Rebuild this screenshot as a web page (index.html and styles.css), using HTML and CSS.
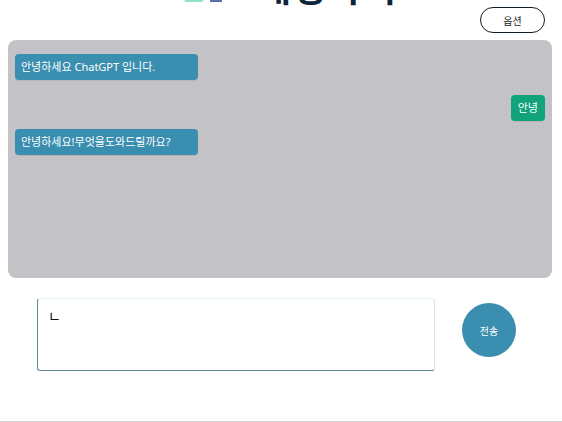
FILE: index.html
```html
<!DOCTYPE html>
<html lang="ko">
<head>
    <meta charset="UTF-8">
    <meta name="viewport" content="width=device-width, initial-scale=1.0">
    <title>ChatGPT 채팅</title>
    <link rel="stylesheet" href="styles.css">
</head>
<body>
    <div class="header">
        <svg class="logo" width="38" height="30" viewBox="0 0 38 30">
            <rect x="0" y="0" width="20" height="30" rx="3" fill="#8fe3c8"></rect>
            <rect x="26" y="0" width="12" height="30" fill="#5a6fa8"></rect>
        </svg>
        <h1 class="title">채팅하기</h1>
    </div>

    <div class="toolbar">
        <button class="option-button">옵션</button>
    </div>

    <div class="chat-box" id="chatBox">
        <div class="message bot">안녕하세요 ChatGPT 입니다.</div>
        <div class="message user">안녕</div>
        <div class="message bot second">안녕하세요!무엇을도와드릴까요?</div>
    </div>

    <div class="input-row">
        <textarea class="chat-input" id="chatInput">ㄴ</textarea>
        <button class="send-button">전송</button>
    </div>

    <div class="footer"></div>
</body>
</html>
```

FILE: styles.css
```css
body {
    font-family: 'Noto Sans', 'Noto Sans CJK KR', sans-serif;
    background-color: #fff;
    margin: 0 10px 0 8px;
    overflow: hidden;
}

.header {
    display: flex;
    align-items: flex-end;
    justify-content: center;
    height: 40px;
    margin-top: -33px;
    padding-left: 22px;
}

.logo {
    display: block;
    margin-bottom: 5px;
    margin-right: 36px;
}

.title {
    margin: 0;
    font-size: 36px;
    line-height: 40px;
    font-weight: 700;
    color: #0c2438;
    letter-spacing: 2px;
    margin-bottom: -2px;
}

.toolbar {
    display: flex;
    justify-content: flex-end;
    padding-right: 7px;
    height: 26px;
}

.option-button {
    width: 65px;
    height: 26px;
    background-color: #fff;
    border: 1.5px solid #0f1d28;
    border-radius: 13px;
    font-family: 'Noto Sans CJK KR', sans-serif;
    font-size: 10px;
    color: #222;
    cursor: pointer;
    padding: 0;
}

.chat-box {
    margin-top: 7px;
    height: 238px;
    background-color: #c3c2c7;
    border-radius: 8px;
    padding: 14px 7px;
    box-sizing: border-box;
    display: flex;
    flex-direction: column;
}

.message {
    color: #fff;
    font-size: 11px;
    line-height: 26px;
    height: 26px;
    padding: 0 6px;
    border-radius: 4px;
    box-sizing: border-box;
    box-shadow: 0 1px 1px rgba(0, 0, 0, 0.08);
}

    .message.bot {
        background-color: #3a8eaf;
        width: 183px;
        align-self: flex-start;
    }

    .message.user {
        background-color: #11a37c;
        align-self: flex-end;
        padding: 0 7px;
        margin-top: 15px;
    }

    .message.second {
        margin-top: 8px;
    }

.input-row {
    display: flex;
    align-items: center;
    margin-top: 20px;
    padding-left: 29px;
}

.chat-input {
    width: 398px;
    height: 73px;
    box-sizing: border-box;
    resize: none;
    border: 1px solid;
    border-color: #e4f4f5 #cfe9ec #5e8a95 #5e8a95;
    border-radius: 3px;
    padding: 6px 10px;
    font-family: 'Noto Sans CJK KR', sans-serif;
    font-size: 14px;
    color: #111;
    outline: none;
    margin: 0;
}

.send-button {
    width: 54px;
    height: 54px;
    margin-left: 27px;
    margin-top: -9px;
    border: none;
    border-radius: 50%;
    background-color: #3a8eaf;
    color: #fff;
    font-family: 'Noto Sans CJK KR', sans-serif;
    font-size: 10px;
    cursor: pointer;
    padding: 0;
}

.footer {
    position: fixed;
    left: 0;
    right: 0;
    bottom: 0;
    height: 1px;
    background-color: #d4d4d4;
}
```
